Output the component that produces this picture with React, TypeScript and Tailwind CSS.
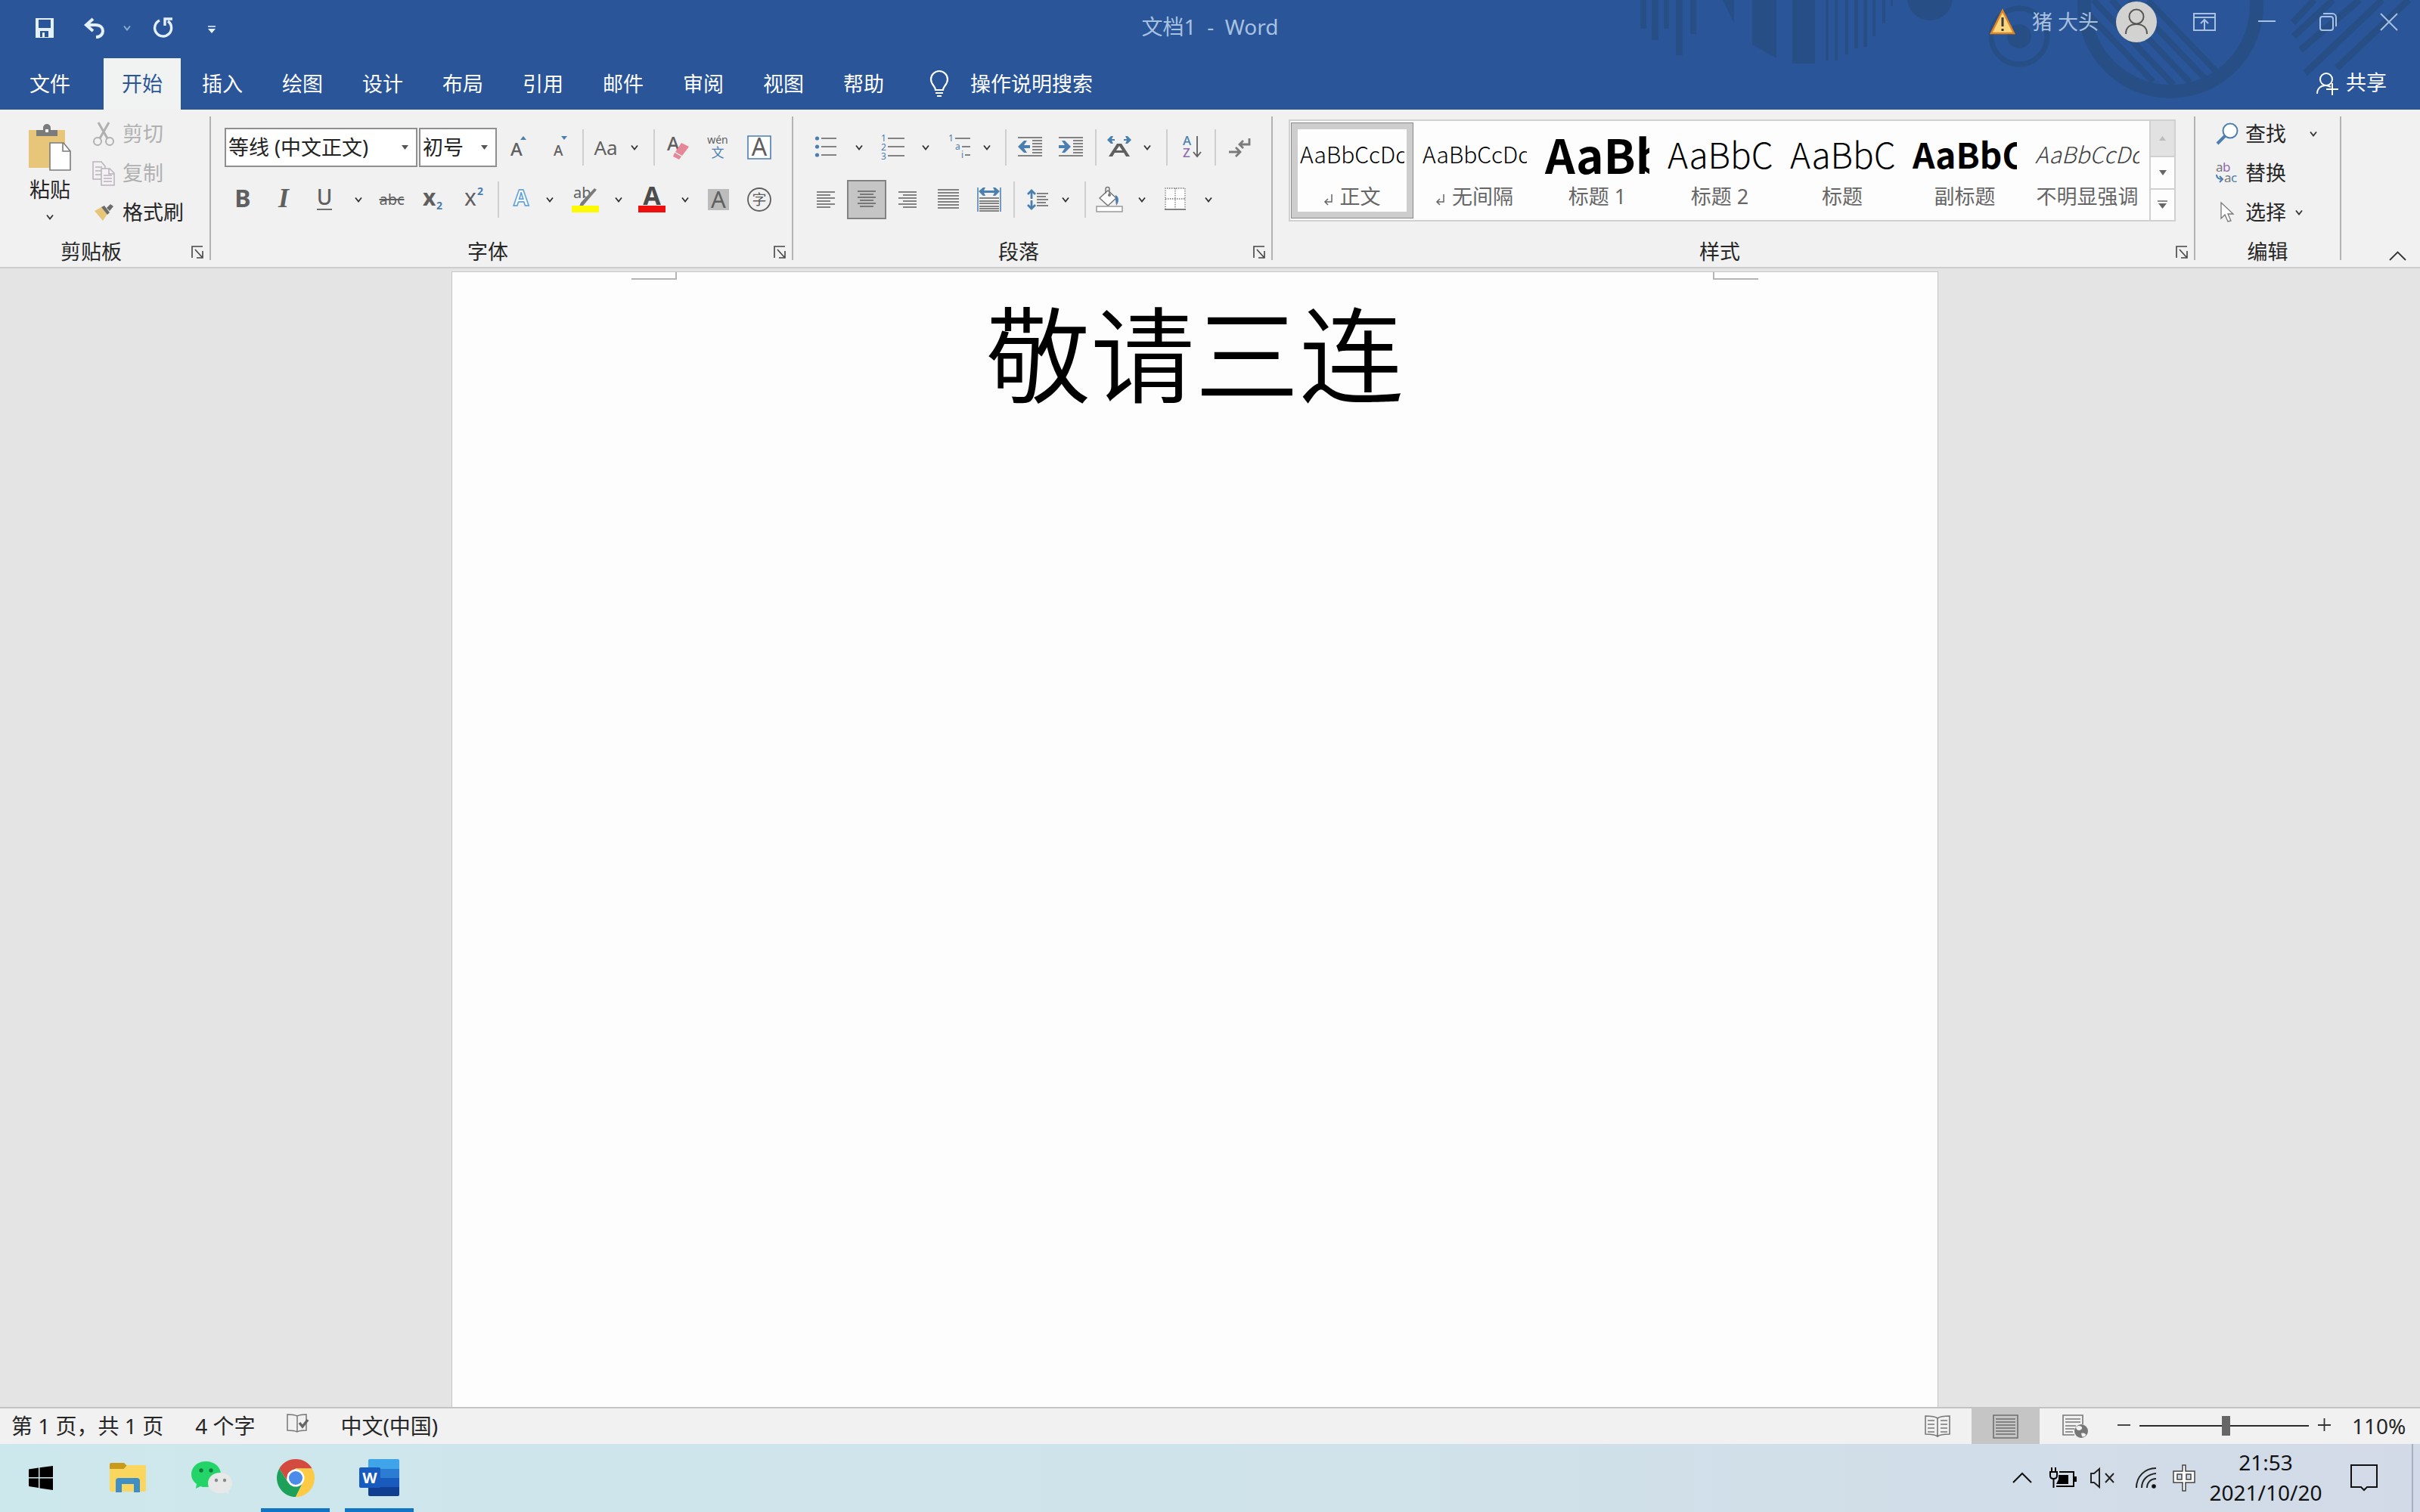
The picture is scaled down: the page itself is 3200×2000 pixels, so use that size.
import { useState } from "react";
import type { ReactNode } from "react";

const GREY = "#5f5f5f";
const BLUE = "#4a7fb0";

interface IconProps {
  w: number;
  h: number;
  children: ReactNode;
}

const Icon = ({ w, h, children }: IconProps) => (
  <svg
    width={w}
    height={h}
    viewBox={`0 0 ${w} ${h}`}
    fill="none"
    className="shrink-0 overflow-visible"
    aria-hidden="true"
  >
    {children}
  </svg>
);

const Chevron = ({ color = "#333" }: { color?: string }) => (
  <Icon w={10} h={8}>
    <path d="M1 1.5 5 6.5 9 1.5" stroke={color} strokeWidth="1.8" />
  </Icon>
);

interface ToolProps {
  label: string;
  className: string;
  children: ReactNode;
}

const Tool = ({ label, className, children }: ToolProps) => (
  <button
    type="button"
    aria-label={label}
    className={`flex h-[52px] shrink-0 items-center justify-center ${className}`}
  >
    {children}
  </button>
);

const Divider = ({ className }: { className: string }) => (
  <div className={`flex h-12 shrink-0 justify-center ${className}`}>
    <div className="w-[2px] bg-[#cfcfcf]" />
  </div>
);

const GroupLine = () => <div className="my-[9px] w-[2px] shrink-0 bg-[#b3b3b3]" />;

interface GroupProps {
  title: string;
  launcher?: boolean;
  className: string;
  children: ReactNode;
}

const Group = ({ title, launcher = true, className, children }: GroupProps) => (
  <section className={`flex flex-col ${className}`}>
    <div className="flex-1">{children}</div>
    <div className="flex h-[38px] items-start">
      <h2 className="flex-1 text-center text-[27px] leading-9">{title}</h2>
      {launcher && (
        <button type="button" aria-label={`${title}设置`} className="flex w-9 justify-center pt-[10px] pl-1">
          <Icon w={16} h={17}>
            <path d="M1 16V1h14M5 5l9 10M15 7v9H7" stroke="#444" strokeWidth="1.6" />
          </Icon>
        </button>
      )}
    </div>
  </section>
);

/* ---------- title bar ---------- */

const HeaderArt = () => (
  <svg
    width="1100"
    height="145"
    viewBox="0 0 1100 145"
    className="absolute top-0 right-0"
    fill="#274f86"
    aria-hidden="true"
  >
    <path d="M69 0h8v38h-8zM84 0h9v53h-9zM100 0h7v38h-7zM116 0h9v73h-9zM135 0h8v45h-8zM178 0h15v31zM217 0h32v77l-32-18zM270 0h30v84h-30zM314 0h4v80h-4zM326 0h4v80h-4zM340 0h4v72h-4zM352 0h5v64h-5zM364 0h5v62h-5zM376 0h4v48h-4zM389 0h4v31h-4zM400 0h3v8h-3z" />
    <circle cx="452" cy="-3" r="30" />
    <circle cx="570" cy="48" r="37" fill="none" stroke="#274f86" strokeWidth="7" />
    <circle cx="570" cy="48" r="16" />
    <circle cx="770" cy="7" r="114" fill="none" stroke="#274f86" strokeWidth="18" />
    <g stroke="#274f86" strokeWidth="8">
      <path d="M655 12l92 96M668 0l106 112M692 0l104 109M716 0l100 104M740 0l92 96" />
      <path d="M960 0l-28 30M985 0l-52 48M1020 0l-78 66M1050 0l-102 97M1085 0l-95 90" strokeWidth="9" />
    </g>
  </svg>
);

const TitleBar = () => (
  <div className="relative grid h-[77px] grid-cols-[1fr_auto_1fr] text-[#a9c1e0]">
    <div className="flex items-center pb-1 pl-[47px]">
      <button type="button" aria-label="保存">
        <Icon w={24} h={26}>
          <path d="M0 0h24v26H0z" fill="#e4f0fb" />
          <path d="M4 2h16v11H4zM6 17h11v8H6z" fill="#2a5699" />
          <path d="M9 19h3v6H9z" fill="#e4f0fb" />
        </Icon>
      </button>
      <button type="button" aria-label="撤消" className="ml-[41px]">
        <Icon w={26} h={26}>
          <path d="M11 1 2 9l9 8M3 9h11c7 0 10 4 10 8s-3 8-9 8" stroke="#e4f0fb" strokeWidth="4" />
        </Icon>
      </button>
      <button type="button" aria-label="撤消列表" className="ml-[25px]">
        <Chevron color="#8fb0d8" />
      </button>
      <button type="button" aria-label="重复" className="ml-[29px]">
        <Icon w={27} h={27}>
          <path d="M9 4a11 11 0 1 0 11 1" stroke="#e4f0fb" strokeWidth="3.4" />
          <path d="M16 11V2h10" stroke="#e4f0fb" strokeWidth="3.4" />
        </Icon>
      </button>
      <button type="button" aria-label="自定义快速访问工具栏" className="ml-[46px] pt-1">
        <Icon w={10} h={10}>
          <path d="M0 1h10" stroke="#e4f0fb" strokeWidth="1.6" />
          <path d="M0 4h10L5 10z" fill="#e4f0fb" />
        </Icon>
      </button>
    </div>
    <h1 className="pt-[17px] text-[28px] leading-9 whitespace-pre">文档1&nbsp; -&nbsp; Word</h1>
    <div className="flex h-[58px] items-center justify-end pr-[29px]">
      <Icon w={32} h={34}>
        <path d="M16 2 31 32H1z" fill="#fbd67c" stroke="#dd8424" strokeWidth="2.5" />
        <path d="M16 11v12M16 26v3" stroke="#3a3a3a" strokeWidth="3" />
      </Icon>
      <span className="ml-[23px] text-[27px] leading-9">猪 大头</span>
      <button type="button" aria-label="帐户" className="ml-[23px]">
        <Icon w={54} h={54}>
          <circle cx="27" cy="27" r="27" fill="#d2d3d1" />
          <circle cx="27" cy="20" r="9.5" stroke="#555" strokeWidth="2" />
          <path d="M13 43c0-9 6-13 14-13s14 4 14 13" stroke="#555" strokeWidth="2" />
        </Icon>
      </button>
      <button type="button" aria-label="功能区显示选项" className="ml-12">
        <Icon w={30} h={24}>
          <path d="M1 1h28v22H1zM1 6h28M15 22V10M10 14l5-5 5 5" stroke="#a9c1e0" strokeWidth="2" />
        </Icon>
      </button>
      <button type="button" aria-label="最小化" className="ml-14">
        <Icon w={23} h={24}>
          <path d="M0 11h23" stroke="#a9c1e0" strokeWidth="2" />
        </Icon>
      </button>
      <button type="button" aria-label="还原" className="ml-[58px]">
        <Icon w={23} h={24}>
          <rect x="1" y="5" width="17" height="18" rx="3" stroke="#a9c1e0" strokeWidth="2" />
          <path d="M5 1h12a5 5 0 0 1 5 5v12" stroke="#a9c1e0" strokeWidth="2" />
        </Icon>
      </button>
      <button type="button" aria-label="关闭" className="ml-[57px]">
        <Icon w={24} h={24}>
          <path d="m1 1 22 22M23 1 1 23" stroke="#a9c1e0" strokeWidth="2" />
        </Icon>
      </button>
    </div>
  </div>
);

const tabs = ["开始", "插入", "绘图", "设计", "布局", "引用", "邮件", "审阅", "视图", "帮助"];

const TabBar = () => {
  const [active, setActive] = useState("开始");

  return (
    <nav className="relative flex h-[68px] text-[27px] text-white">
      <button type="button" className="w-[135px] pr-[3px]">
        文件
      </button>
      {tabs.map((tab) => (
        <button
          key={tab}
          type="button"
          onClick={() => setActive(tab)}
          className={`mx-[2px] w-[102px] ${
            tab === active ? "bg-[#f1f3f3] text-[#2a5699]" : ""
          }`}
        >
          {tab}
        </button>
      ))}
      <button type="button" className="ml-[34px] flex items-center gap-7">
        <Icon w={26} h={36}>
          <path
            d="M8 26c0-5-6-7-6-14a11 11 0 0 1 22 0c0 7-6 9-6 14zM8 30h10M10 34h6"
            stroke="#fff"
            strokeWidth="2.2"
          />
        </Icon>
        操作说明搜索
      </button>
      <button type="button" className="mr-11 ml-auto flex items-center gap-[10px] pb-1">
        <Icon w={29} h={30}>
          <circle cx="13" cy="11" r="8" stroke="#fff" strokeWidth="2" />
          <path d="M1 30c0-7 5-11 11-11 3 0 5 1 7 2M21 16v16M13 24h16" stroke="#fff" strokeWidth="2" />
        </Icon>
        共享
      </button>
    </nav>
  );
};

/* ---------- clipboard ---------- */

const ClipboardGroup = () => (
  <Group title="剪贴板" className="w-[277px] shrink-0">
    <div className="flex">
      <button type="button" className="flex w-[132px] flex-col items-center pt-[21px] text-[27px] leading-9">
        <Icon w={56} h={60}>
          <path d="M0 6h48v50H0z" fill="#e7c67a" />
          <path d="M10 14V6h9V3a5 5 0 0 1 10 0v3h9v8z" fill="#7b7b7b" />
          <path d="M22 5h4v4h-4z" fill="#fff" />
          <path d="M28 23h18l9 11v25H28z" fill="#fff" stroke="#7b7b7b" strokeWidth="1.6" />
          <path d="M45 23v11h10" stroke="#7b7b7b" strokeWidth="1.6" />
        </Icon>
        <span className="mt-[7px] mb-[14px]">粘贴</span>
        <Chevron />
      </button>
      <div className="flex flex-col pt-[6px] text-[27px]">
        <button type="button" className="flex h-[52px] items-center text-[#b0b0b0]">
          <span className="flex w-[30px] justify-center -ml-[10px]">
            <Icon w={28} h={31}>
              <path d="m7 0 12 21M21 0 9 21" stroke="#b0b0b0" strokeWidth="3" />
              <circle cx="6" cy="25" r="5" stroke="#b0b0b0" strokeWidth="2" />
              <circle cx="22" cy="25" r="5" stroke="#b0b0b0" strokeWidth="2" />
            </Icon>
          </span>
          <span className="pl-[10px]">剪切</span>
        </button>
        <button type="button" className="flex h-[52px] items-center text-[#b0b0b0]">
          <span className="flex w-[30px] justify-center -ml-[10px]">
            <Icon w={30} h={33}>
              <path d="M1 1h11l5 6v17H1zM4 8h9M4 13h9M4 18h9" stroke="#b9b3b9" strokeWidth="1.5" />
              <path d="M12 10h11l6 6v16H12z" fill="#f4f2f4" stroke="#b9b3b9" strokeWidth="1.5" />
              <path d="M22 10v7h7M15 19h11M15 23h11M15 27h11" stroke="#b9b3b9" strokeWidth="1.5" />
            </Icon>
          </span>
          <span className="pl-[10px]">复制</span>
        </button>
        <button type="button" className="flex h-[52px] items-center">
          <span className="flex w-[30px] justify-center -ml-[10px]">
            <Icon w={25} h={22}>
              <path d="M0 9 9 4l8 9-6 9z" fill="#e7c67a" />
              <path d="m9 4 4-2 7 9-3 3z" fill="#6b6b6b" />
              <path d="m16 5 5-5 4 3-5 6z" fill="#6b6b6b" />
            </Icon>
          </span>
          <span className="pl-[10px]">格式刷</span>
        </button>
      </div>
    </div>
  </Group>
);

/* ---------- font ---------- */

interface ComboProps {
  label: string;
  options: string[];
  className: string;
}

const Combo = ({ label, options, className }: ComboProps) => (
  <div className={`relative shrink-0 ${className}`}>
    <select
      aria-label={label}
      className="h-[52px] w-full appearance-none border-2 border-[#8f8f8f] bg-white pl-[3px] text-[27px] text-[#222]"
    >
      {options.map((option) => (
        <option key={option}>{option}</option>
      ))}
    </select>
    <span className="pointer-events-none absolute top-[23px] right-3">
      <Icon w={9} h={6}>
        <path d="M0 0h9L4.500 6z" fill="#555" />
      </Icon>
    </span>
  </div>
);

const FontGroup = () => (
  <Group title="字体" className="w-[768px] shrink-0">
    <div className="flex items-center pt-6 pl-[18px]">
      <Combo label="字体" options={["等线 (中文正文)", "宋体", "黑体"]} className="mr-[2px] w-[255px]" />
      <Combo label="字号" options={["初号", "小初", "一号"]} className="w-[103px]" />
      <Tool label="增大字号" className="w-[53px]">
        <Icon w={18} h={28}>
          <text x="0" y="25" fontSize="24" fill={GREY} fontWeight="500">A</text>
          <path d="M13 4h8l-4-5z" fill={BLUE} />
        </Icon>
      </Tool>
      <Tool label="减小字号" className="w-[58px]">
        <Icon w={14} h={28}>
          <text x="0" y="25" fontSize="19" fill={GREY} fontWeight="500">A</text>
          <path d="M10 -1h8l-4 5z" fill={BLUE} />
        </Icon>
      </Tool>
      <Divider className="w-[6px]" />
      <Tool label="更改大小写" className="w-[54px]">
        <span className="text-[26px] text-[#5f5f5f]">Aa</span>
      </Tool>
      <Tool label="大小写选项" className="w-[22px]">
        <Chevron />
      </Tool>
      <Divider className="w-[30px]" />
      <Tool label="清除所有格式" className="w-[34px]">
        <Icon w={30} h={32}>
          <text x="0" y="20" fontSize="25" fill={GREY} fontWeight="500">A</text>
          <path d="m19 10 10 5-9 12-9-5z" fill="#e58797" />
          <path d="m10 23 9 5-3 4-8-4z" fill="#e58797" />
        </Icon>
      </Tool>
      <Tool label="拼音指南" className="w-[70px]">
        <Icon w={28} h={32}>
          <text x="14" y="11" fontSize="14" fill={GREY} textAnchor="middle">wén</text>
          <text x="14" y="29" fontSize="17" fill={BLUE} textAnchor="middle">文</text>
        </Icon>
      </Tool>
      <Tool label="字符边框" className="w-10">
        <Icon w={32} h={32}>
          <path d="M1 1h30v30H1z" fill="#fff" stroke={BLUE} strokeWidth="1.600" />
          <text x="16" y="27" fontSize="32" fill={GREY} textAnchor="middle">A</text>
        </Icon>
      </Tool>
    </div>
    <div className="flex items-center pt-[17px] pl-[15px] text-[#5f5f5f]">
      <Tool label="加粗" className="w-[54px] pb-1">
        <span className="text-[32px] font-bold">B</span>
      </Tool>
      <Tool label="倾斜" className="w-[54px] pb-1">
        <span className="font-[Liberation_Serif] text-[36px] font-bold italic">I</span>
      </Tool>
      <Tool label="下划线" className="w-[54px]">
        <Icon w={22} h={28}>
          <text x="11" y="21" fontSize="28" fill={GREY} fontWeight="500" textAnchor="middle">U</text>
          <path d="M1 27h20" stroke={GREY} strokeWidth="1.800" />
        </Icon>
      </Tool>
      <Tool label="下划线选项" className="w-9">
        <Chevron />
      </Tool>
      <Tool label="删除线" className="w-[52px]">
        <span className="text-xl line-through">abc</span>
      </Tool>
      <Tool label="下标" className="w-14">
        <Icon w={26} h={32}>
          <text x="0" y="24" fontSize="30" fill={GREY} fontWeight="700">x</text>
          <text x="18" y="29" fontSize="14" fill={BLUE} fontWeight="700">2</text>
        </Icon>
      </Tool>
      <Tool label="上标" className="w-[54px]">
        <Icon w={26} h={32}>
          <text x="0" y="24" fontSize="30" fill={GREY}>x</text>
          <text x="17" y="10" fontSize="14" fill={BLUE} fontWeight="700">2</text>
        </Icon>
      </Tool>
      <Divider className="w-[10px]" />
      <Tool label="文本效果" className="w-[50px]">
        <Icon w={22} h={26}>
          <text x="11" y="21" fontSize="29" fill="#fff" stroke="#5aa0d8" strokeWidth="1.500" textAnchor="middle" fontWeight="700">A</text>
        </Icon>
      </Tool>
      <Tool label="文本效果选项" className="w-[26px]">
        <Chevron />
      </Tool>
      <Tool label="突出显示" className="w-[68px]">
        <Icon w={36} h={34}>
          <text x="2" y="15" fontSize="20" fill={GREY}>ab</text>
          <path d="m30 2 3 2-18 21-5 1 2-5z" fill="#7b7b7b" />
          <path d="M0 25h36v9H0z" fill="#fdf900" />
        </Icon>
      </Tool>
      <Tool label="突出显示颜色" className="w-5">
        <Chevron />
      </Tool>
      <Tool label="字体颜色" className="w-[68px]">
        <Icon w={36} h={34}>
          <text x="18" y="24" fontSize="34" fill="#4c4c4c" fontWeight="700" textAnchor="middle">A</text>
          <path d="M0 25h36v9H0z" fill="#ee0f0f" />
        </Icon>
      </Tool>
      <Tool label="字体颜色选项" className="w-5">
        <Chevron />
      </Tool>
      <Tool label="字符底纹" className="w-[68px]">
        <Icon w={28} h={28}>
          <path d="M0 0h28v28H0z" fill="#bcbcbc" />
          <text x="14" y="25" fontSize="31" fill={GREY} textAnchor="middle">A</text>
        </Icon>
      </Tool>
      <Tool label="带圈字符" className="w-10">
        <Icon w={32} h={32}>
          <circle cx="16" cy="16" r="15" stroke={GREY} strokeWidth="1.800" />
          <text x="16" y="23" fontSize="19" fill={GREY} textAnchor="middle">字</text>
        </Icon>
      </Tool>
    </div>
  </Group>
);

/* ---------- paragraph ---------- */

const ParagraphGroup = () => (
  <Group title="段落" className="w-[632px] shrink-0">
    <div className="flex items-center pt-6 pl-[22px]">
      <Tool label="项目符号" className="w-[42px]">
        <Icon w={28} h={28}>
          <circle cx="2.500" cy="2" r="2.600" fill={BLUE} />
          <circle cx="2.500" cy="13" r="2.600" fill={BLUE} />
          <circle cx="2.500" cy="24" r="2.600" fill={BLUE} />
          <path d="M8 2h20M8 13h20M8 24h20" stroke={GREY} strokeWidth="1.400" />
        </Icon>
      </Tool>
      <Tool label="项目符号选项" className="w-[46px]">
        <Chevron />
      </Tool>
      <Tool label="编号" className="w-[42px]">
        <Icon w={31} h={32}>
          <g fontSize="12" fill={BLUE}>
            <text x="0" y="8">1</text>
            <text x="0" y="20">2</text>
            <text x="0" y="32">3</text>
          </g>
          <path d="M9 4h22M9 15h22M9 27h22" stroke={GREY} strokeWidth="1.400" />
        </Icon>
      </Tool>
      <Tool label="编号选项" className="w-[46px]">
        <Chevron />
      </Tool>
      <Tool label="多级列表" className="w-[42px]">
        <Icon w={29} h={32}>
          <g fontSize="12" fill={BLUE}>
            <text x="0" y="8">1</text>
            <text x="9" y="19">a</text>
            <text x="17" y="30">i</text>
          </g>
          <path d="M9 4h20M18 15h11M22 26h7" stroke={GREY} strokeWidth="1.400" />
        </Icon>
      </Tool>
      <Tool label="多级列表选项" className="w-8">
        <Chevron />
      </Tool>
      <Divider className="w-[18px]" />
      <Tool label="减少缩进量" className="w-[46px]">
        <Icon w={32} h={26}>
          <path d="M0 0h32M19 4h13M19 8h13M19 12h13M19 16h13M19 20h13M0 24h32" stroke={GREY} strokeWidth="1.400" />
          <path d="M0 12 8 4h4l-4 6h8v4H8l4 6H8z" fill={BLUE} />
        </Icon>
      </Tool>
      <Tool label="增加缩进量" className="w-[62px]">
        <Icon w={32} h={26}>
          <path d="M0 0h32M19 4h13M19 8h13M19 12h13M19 16h13M19 20h13M0 24h32" stroke={GREY} strokeWidth="1.400" />
          <path d="M16 12 8 4H4l4 6H0v4h8l-4 6h4z" fill={BLUE} />
        </Icon>
      </Tool>
      <Divider className="w-1" />
      <Tool label="中文版式" className="w-[58px]">
        <Icon w={32} h={28}>
          <path d="M2 26 13 9h6l11 17h-5l-3-5H10l-3 5zM12 18h8l-4-6z" fill={GREY} fillRule="evenodd" />
          <path d="m0 4 5-5h3L6 3h4v2H6l2 4H5zM32 4l-5-5h-3l2 4h-4v2h4l-2 4h3z" fill={BLUE} />
        </Icon>
      </Tool>
      <Tool label="中文版式选项" className="w-4">
        <Chevron />
      </Tool>
      <Divider className="w-9" />
      <Tool label="排序" className="w-[30px]">
        <Icon w={24} h={32}>
          <text x="0" y="13" fontSize="17" fill={BLUE} fontWeight="500">A</text>
          <text x="0" y="29" fontSize="17" fill="#8d6bad" fontWeight="500">Z</text>
          <path d="M19 1v27M14 22l5 6 5-6" stroke={GREY} strokeWidth="1.800" />
        </Icon>
      </Tool>
      <Divider className="w-8" />
      <Tool label="显示编辑标记" className="w-8">
        <Icon w={29} h={27}>
          <path d="M27 1v8H15M19 4l-5 5 5 5" stroke="#7b7b7b" strokeWidth="2.800" />
          <path d="M0 19h13M9 13l6 6-6 6" stroke="#7b7b7b" strokeWidth="2.800" />
        </Icon>
      </Tool>
    </div>
    <div className="flex items-center pt-[17px] pl-4">
      <Tool label="左对齐" className="w-[54px]">
        <Icon w={24} h={22}>
          <path d="M0 1h24M0 5h18M0 9h24M0 13h18M0 17h24M0 21h18" stroke={GREY} strokeWidth="1.300" />
        </Icon>
      </Tool>
      <Tool label="居中" className="mx-px w-[52px] border-2 border-[#828282] bg-[#c5c5c5]">
        <Icon w={24} h={22}>
          <path d="M0 0h24M3 4h18M0 8h24M3 12h18M0 16h24M3 20h18" stroke={GREY} strokeWidth="1.300" />
        </Icon>
      </Tool>
      <Tool label="右对齐" className="w-[54px]">
        <Icon w={24} h={22}>
          <path d="M0 1h24M6 5h18M0 9h24M6 13h18M0 17h24M6 21h18" stroke={GREY} strokeWidth="1.300" />
        </Icon>
      </Tool>
      <Tool label="两端对齐" className="w-[54px]">
        <Icon w={28} h={26}>
          <path d="M0 0h28M0 4h28M0 8h28M0 12h28M0 16h28M0 20h28M0 24h28" stroke={GREY} strokeWidth="1.400" />
        </Icon>
      </Tool>
      <Tool label="分散对齐" className="w-[54px]">
        <Icon w={32} h={32}>
          <path d="M1 0v32M31 0v32" stroke={BLUE} strokeWidth="1.500" />
          <path d="m2 5 6-5h3L9 4h14l-2-4h3l6 5-6 6h-3l2-4H9l2 4H8z" fill={BLUE} />
          <path d="M3 14h26M3 18h26M3 21h26M3 25h26M3 28h26M3 31h26" stroke={GREY} strokeWidth="1.400" />
        </Icon>
      </Tool>
      <Divider className="w-3" />
      <Tool label="行和段落间距" className="w-[50px]">
        <Icon w={28} h={28}>
          <path d="M6 2v11M1 7l5-5 5 5M6 15v11M1 21l5 5 5-5" stroke={BLUE} strokeWidth="2.800" />
          <path d="M13 6h15M13 10h12M13 14h15M13 18h12M13 22h15" stroke={GREY} strokeWidth="1.400" />
        </Icon>
      </Tool>
      <Tool label="间距选项" className="w-6">
        <Chevron />
      </Tool>
      <Divider className="w-7" />
      <Tool label="底纹" className="w-9">
        <Icon w={36} h={34}>
          <path d="m5 15 11-10 11 10-11 10z" fill="#fff" stroke="#777" strokeWidth="1.500" />
          <path d="M13 9V3a2 2 0 0 1 5 0v8" stroke="#777" strokeWidth="1.500" />
          <circle cx="18" cy="11" r="2" fill="#777" />
          <path d="M26 11c5 2 5 9 1 14l-1-8z" fill={BLUE} />
          <path d="M1 26h34v7H1z" fill="#fff" stroke="#9a9a9a" strokeWidth="1.500" />
        </Icon>
      </Tool>
      <Tool label="底纹选项" className="w-[50px]">
        <Chevron />
      </Tool>
      <Tool label="边框" className="w-[38px]">
        <Icon w={28} h={30}>
          <path d="M0 0h28v28H0z" fill="#fff" />
          <path d="M1 28V0h26v28M14 0v28M1 14h26" stroke="#777" strokeWidth="1.300" strokeDasharray="1.500 1.500" />
          <path d="M0 28h28" stroke="#666" strokeWidth="1.600" />
        </Icon>
      </Tool>
      <Tool label="边框选项" className="w-[50px]">
        <Chevron />
      </Tool>
    </div>
  </Group>
);

/* ---------- styles ---------- */

interface StyleItem {
  name: string;
  sample: string;
  mark?: boolean;
  look: string;
}

const styleItems: StyleItem[] = [
  { name: "正文", sample: "AaBbCcDd", mark: true, look: "text-[30px] font-light text-black" },
  { name: "无间隔", sample: "AaBbCcDd", mark: true, look: "text-[30px] font-light text-black" },
  { name: "标题 1", sample: "AaBb", look: "text-[62px] font-bold text-black" },
  { name: "标题 2", sample: "AaBbC", look: "text-[46px] font-light text-black" },
  { name: "标题", sample: "AaBbC", look: "text-[46px] font-light text-black" },
  { name: "副标题", sample: "AaBbC", look: "text-[46px] font-bold text-black" },
  { name: "不明显强调", sample: "AaBbCcDd", look: "text-[30px] font-light text-[#404040] italic" },
];

const StylesGroup = () => {
  const [selected, setSelected] = useState("正文");

  return (
    <Group title="样式" className="min-w-0 flex-1">
      <div className="mt-[13px] mr-6 ml-[21px] flex h-[135px] border-2 border-[#d0d0d0] bg-[#fdfdfd]">
        <div className="flex min-w-0 flex-1 overflow-hidden py-[2px] pl-px">
          {styleItems.map((item) => (
            <button
              key={item.name}
              type="button"
              onClick={() => setSelected(item.name)}
              className={`w-[162px] shrink-0 p-[1px] ${
                item.name === selected ? "bg-[#8a8a8a]" : ""
              }`}
            >
              <span
                className={`flex h-full flex-col overflow-hidden border-8 px-[3px] ${
                  item.name === selected ? "border-[#cdcdcd] bg-[#fdfdfd]" : "border-transparent"
                }`}
              >
                <span
                  className={`h-[70px] overflow-hidden text-left font-[Noto_Sans_CJK_SC] leading-[64px] ${item.look}`}
                >
                  {item.sample}
                </span>
                <span className="flex items-center justify-center text-[27px] leading-10 whitespace-nowrap text-[#666]">
                  {item.mark && (
                    <span className="mr-[10px] pt-2">
                      <Icon w={11} h={14}>
                        <path d="M10 0v10H2M5 6l-4 4 4 4" stroke="#666" strokeWidth="1.500" />
                      </Icon>
                    </span>
                  )}
                  {item.name}
                </span>
              </span>
            </button>
          ))}
        </div>
        <div className="flex w-[33px] shrink-0 flex-col border-l-2 border-[#d0d0d0]">
          <button type="button" aria-label="上一行" className="flex h-[46px] items-center justify-center bg-[#e2e2e2]">
            <Icon w={9} h={6}>
              <path d="M0 6h9L4.500 0z" fill="#bdbdbd" />
            </Icon>
          </button>
          <button
            type="button"
            aria-label="下一行"
            className="flex flex-1 items-center justify-center border-y-2 border-[#d0d0d0]"
          >
            <Icon w={10} h={7}>
              <path d="M0 0h10L5 7z" fill="#666" />
            </Icon>
          </button>
          <button type="button" aria-label="其他样式" className="flex flex-1 items-center justify-center">
            <Icon w={13} h={11}>
              <path d="M0 1h13" stroke="#666" strokeWidth="1.500" />
              <path d="M1 4h11l-5.500 7z" fill="#666" />
            </Icon>
          </button>
        </div>
      </div>
    </Group>
  );
};

/* ---------- editing ---------- */

const EditingGroup = () => (
  <Group title="编辑" launcher={false} className="w-[191px] shrink-0">
    <div className="flex flex-col pt-[6px] pl-[27px] text-[27px]">
      <button type="button" className="flex h-[52px] items-center">
        <span className="flex w-[29px] justify-center">
          <Icon w={30} h={30}>
            <circle cx="19" cy="11" r="9.500" fill="#fff" stroke={BLUE} strokeWidth="2" />
            <path d="M12 18 2 28" stroke={BLUE} strokeWidth="4" />
          </Icon>
        </span>
        <span className="pr-[31px] pl-[10px]">查找</span>
        <Chevron />
      </button>
      <button type="button" className="flex h-[52px] items-center">
        <span className="flex w-[29px] justify-center">
          <Icon w={29} h={30}>
            <text x="0" y="13" fontSize="17" fill="#777">a</text>
            <text x="9" y="13" fontSize="17" fill="#9467b4">b</text>
            <text x="11" y="27" fontSize="17" fill="#777">a</text>
            <text x="20" y="27" fontSize="17" fill={BLUE}>c</text>
            <path d="M1 17c0 5 3 6 7 6M5 19l4 4-4 4" stroke={BLUE} strokeWidth="2" />
          </Icon>
        </span>
        <span className="pl-[10px]">替换</span>
      </button>
      <button type="button" className="flex h-[52px] items-center">
        <span className="flex w-[29px] justify-center">
          <Icon w={18} h={28}>
            <path d="M1 1v21l5-5 4 9 4-1-4-9h7z" fill="#fff" stroke="#777" strokeWidth="1.300" />
          </Icon>
        </span>
        <span className="pr-3 pl-[10px]">选择</span>
        <Chevron />
      </button>
    </div>
  </Group>
);

const Ribbon = () => (
  <div className="flex h-[210px] border-b-2 border-[#cdcdcd] bg-[#f1f1f1] text-[#262626]">
    <ClipboardGroup />
    <GroupLine />
    <FontGroup />
    <GroupLine />
    <ParagraphGroup />
    <GroupLine />
    <StylesGroup />
    <GroupLine />
    <EditingGroup />
    <GroupLine />
    <div className="flex w-[104px] shrink-0 items-end justify-center pb-2 pl-11">
      <button type="button" aria-label="折叠功能区">
        <Icon w={23} h={13}>
          <path d="M1 12 11.500 1.500 22 12" stroke="#333" strokeWidth="1.800" />
        </Icon>
      </button>
    </div>
  </div>
);

/* ---------- document ---------- */

const Document = () => (
  <main className="flex flex-1 justify-center bg-[#e4e4e4] pt-1 pr-10">
    <article className="w-[1966px] border border-b-0 border-[#c6c6c6] bg-[#fdfdfd]">
      <div className="flex justify-between px-[237px]">
        <div className="h-[10px] w-[60px] border-r-2 border-b-2 border-[#b5b5b5]" />
        <div className="h-[10px] w-[60px] border-b-2 border-l-2 border-[#b5b5b5]" />
      </div>
      <p className="pt-[18px] text-center text-[138px] leading-[160px] font-[350] text-black">敬请三连</p>
    </article>
  </main>
);

/* ---------- status bar ---------- */

const StatusBar = () => {
  const [zoom, setZoom] = useState(110);

  return (
    <footer className="flex h-[49px] items-center border-t-2 border-[#c3c3c3] bg-[#f1f1f1] text-[28px] leading-[47px] text-[#262626]">
      <span className="pl-[15px]">第 1 页，共 1 页</span>
      <span className="pl-[42px]">4 个字</span>
      <button type="button" aria-label="校对" className="mx-[42px] pb-2">
        <Icon w={29} h={25}>
          <path d="M1 1c5 0 9 0 13 2 4-2 8-2 12-2v21c-4 0-9 0-12 2-4-2-8-2-13-2zM14 3v21" stroke="#777" strokeWidth="1.500" />
          <path d="m17 12 4 5 7-9" stroke="#666" strokeWidth="3.500" />
        </Icon>
      </button>
      <span>中文(中国)</span>
      <button type="button" aria-label="阅读视图" className="ml-auto flex w-[90px] justify-center">
        <Icon w={34} h={30}>
          <path
            d="M1 1c6 0 12 0 16 3 4-3 10-3 16-3v24c-6 0-12 0-16 3-4-3-10-3-16-3zM17 4v25M4 7h9M4 12h9M4 17h9M4 22h9M21 7h9M21 12h9M21 17h9M21 22h9"
            stroke="#777"
            strokeWidth="1.600"
          />
        </Icon>
      </button>
      <button type="button" aria-label="页面视图" className="flex h-[47px] w-[90px] items-center justify-center bg-[#c5c5c5]">
        <Icon w={34} h={32}>
          <path
            d="M1 1h32v30H1zM4 6h26M4 10h26M4 14h26M4 18h26M4 22h26M4 26h26"
            stroke="#6e6e6e"
            strokeWidth="1.600"
          />
        </Icon>
      </button>
      <button type="button" aria-label="Web 版式视图" className="flex w-[90px] justify-center pl-1">
        <Icon w={34} h={31}>
          <path d="M27 13V1H1v26h15M4 6h20M4 10h20M4 15h14M4 19h12M4 23h10" stroke="#777" strokeWidth="1.600" />
          <circle cx="25" cy="22" r="9" fill="#777" />
          <path d="M18 17c3-3 7-2 8 0s-2 4-4 4-4-2-4-4zM25 25c3-1 6 0 6 2s-3 3-5 2z" fill="#f1f1f1" />
        </Icon>
      </button>
      <button type="button" aria-label="缩小" className="ml-[13px] pb-1" onClick={() => setZoom(zoom - 10)}>
        <Icon w={17} h={17}>
          <path d="M0 9h17" stroke="#333" strokeWidth="1.800" />
        </Icon>
      </button>
      <input
        type="range"
        aria-label="显示比例"
        min={10}
        max={206}
        value={zoom}
        onChange={(e) => setZoom(Number(e.target.value))}
        className="mx-3 mb-[2px] h-7 w-[224px] appearance-none bg-transparent [&::-webkit-slider-runnable-track]:h-[2px] [&::-webkit-slider-runnable-track]:bg-[#2b2b2b] [&::-webkit-slider-thumb]:-mt-3 [&::-webkit-slider-thumb]:h-[26px] [&::-webkit-slider-thumb]:w-[11px] [&::-webkit-slider-thumb]:appearance-none [&::-webkit-slider-thumb]:bg-[#666]"
      />
      <button type="button" aria-label="放大" className="pb-1" onClick={() => setZoom(zoom + 10)}>
        <Icon w={17} h={17}>
          <path d="M0 9h17M8.500 0v17" stroke="#333" strokeWidth="1.800" />
        </Icon>
      </button>
      <span className="w-[118px] pl-7">{zoom}%</span>
    </footer>
  );
};

/* ---------- taskbar ---------- */

interface TaskProps {
  label: string;
  running?: boolean;
  children: ReactNode;
}

const Task = ({ label, running = false, children }: TaskProps) => (
  <button
    type="button"
    aria-label={label}
    className={`flex w-[91px] items-center justify-center border-b-[5px] ${
      running ? "border-[#0f75c4]" : "border-transparent"
    }`}
  >
    <span className="pt-[5px]">{children}</span>
  </button>
);

const Taskbar = () => (
  <div className="flex h-[90px] bg-linear-to-r from-[#cde8ec] via-[#cfe3ea] to-[#d2dae7] pl-2 text-[#111]">
    <Task label="开始">
      <Icon w={32} h={32}>
        <path d="M0 4.500 13 2.500V15H0zM14.500 2.300 32 0v15H14.500zM0 16.500h13V29L0 27zM14.500 16.500H32V32l-17.500-2.500z" fill="#000" />
      </Icon>
    </Task>
    <div className="ml-6 flex gap-5">
      <Task label="文件资源管理器">
        <Icon w={48} h={40}>
          <path d="M0 8V2c0-1 1-2 2-2h17l4 4-4 4z" fill="#c9991a" />
          <path d="M0 8h19l4-5h23a2 2 0 0 1 2 2v31a2 2 0 0 1-2 2H2a2 2 0 0 1-2-2z" fill="#fbd65e" />
          <path d="M8 39V24a4 4 0 0 1 4-4h24a4 4 0 0 1 4 4v15h-8V28H16v11z" fill="#3f8ec6" />
        </Icon>
      </Task>
      <Task label="微信">
        <Icon w={54} h={46}>
          <path d="M19 1c11 0 20 7 20 17s-9 17-20 17c-2 0-5 0-7-1l-6 3 1-6C3 28 0 24 0 18 0 8 9 1 19 1z" fill="#23d468" />
          <circle cx="13" cy="13" r="2.700" fill="#127a3c" />
          <circle cx="26" cy="13" r="2.700" fill="#127a3c" />
          <path d="M38 16c9 0 16 6 16 14 0 4-2 8-5 10l1 5-5-3c-2 1-5 1-7 1-9 0-16-5-16-13s7-14 16-14z" fill="#e6e9e8" />
          <circle cx="33" cy="26" r="2.200" fill="#858b88" />
          <circle cx="44" cy="26" r="2.200" fill="#858b88" />
        </Icon>
      </Task>
      <Task label="Chrome" running>
        <Icon w={50} h={50}>
          <path d="M25 13.500 34.500 31 25 50A25 25 0 0 1 3.350 12.500L15 31z" fill="#1da15a" />
          <path d="M3.350 12.500A25 25 0 0 1 46.650 12.500H25l-10 6-2 9z" fill="#d34a3f" />
          <path d="M34.500 31 25 50A25 25 0 0 0 46.650 12.500H25z" fill="#fdca45" />
          <circle cx="25" cy="25" r="11.500" fill="#fff" />
          <circle cx="25" cy="25" r="9" fill="#4b8bea" />
        </Icon>
      </Task>
      <Task label="Word" running>
        <Icon w={53} h={50}>
          <path d="M12 13V2a2 2 0 0 1 2-2h37a2 2 0 0 1 2 2v11z" fill="#3fa4e8" />
          <path d="M12 13h41v12H12z" fill="#2a7dd3" />
          <path d="M12 25h41v12H12z" fill="#195abd" />
          <path d="M12 37h41v10a2 2 0 0 1-2 2H14a2 2 0 0 1-2-2z" fill="#103f91" />
          <rect y="11" width="28" height="27" rx="2" fill="#185abd" />
          <text x="14" y="32" fontSize="20" fontWeight="700" fill="#fff" textAnchor="middle">W</text>
        </Icon>
      </Task>
    </div>
    <div className="ml-auto flex items-center">
      <button type="button" aria-label="显示隐藏的图标">
        <Icon w={26} h={14}>
          <path d="M1 13 13 1l12 12" stroke="#111" strokeWidth="2" />
        </Icon>
      </button>
      <span className="ml-[23px]">
        <Icon w={36} h={28}>
          <path d="M13 6h19v19H9" stroke="#000" strokeWidth="2" />
          <path d="M12 10h13v12H9l3-6zM33 12h3v7h-3z" fill="#000" />
          <path d="M3 0v6M8 0v6M1 6h9v5c0 3-2 4-4.500 4S1 14 1 11zM5.500 15v12" stroke="#000" strokeWidth="2" />
        </Icon>
      </span>
      <span className="ml-[18px]">
        <Icon w={32} h={28}>
          <path d="M1 8h4l7-6v24l-7-6H1zM20 8l11 12M31 8 20 20" stroke="#222" strokeWidth="2" />
        </Icon>
      </span>
      <span className="ml-7">
        <Icon w={28} h={28}>
          <path d="M1 27C1 12 12 1 27 1M8 27C8 16 16 9 27 8M15 27c0-7 5-12 12-12" stroke="#222" strokeWidth="2" />
          <circle cx="24" cy="25" r="2.800" fill="#111" />
        </Icon>
      </span>
      <span className="ml-[21px]">
        <Icon w={30} h={36}>
          <path d="M13 1h4v8h12v15H17v11h-4V24H1V9h12zM6 13v7h6v-7zM18 13v7h6v-7z" fill="#fff" fillRule="evenodd" stroke="#444" strokeWidth="1.500" />
        </Icon>
      </span>
      <div className="flex h-full w-[186px] flex-col items-center pt-1 text-[28px] leading-10">
        <time>21:53</time>
        <time>2021/10/20</time>
      </div>
      <button type="button" aria-label="通知" className="ml-[19px]">
        <Icon w={36} h={36}>
          <path d="M1 1h34v29H22l-4 4-4-4H1z" stroke="#111" strokeWidth="2" />
        </Icon>
      </button>
      <div className="mr-[9px] ml-[45px] h-full w-[2px] bg-[#a5b1c0]" />
    </div>
  </div>
);

const App = () => (
  <div className="flex min-h-screen flex-col font-['Noto_Sans','Noto_Sans_CJK_SC',sans-serif]">
    <header className="relative bg-[#2a5699]">
      <HeaderArt />
      <TitleBar />
      <TabBar />
    </header>
    <Ribbon />
    <Document />
    <StatusBar />
    <Taskbar />
  </div>
);

export default App;
